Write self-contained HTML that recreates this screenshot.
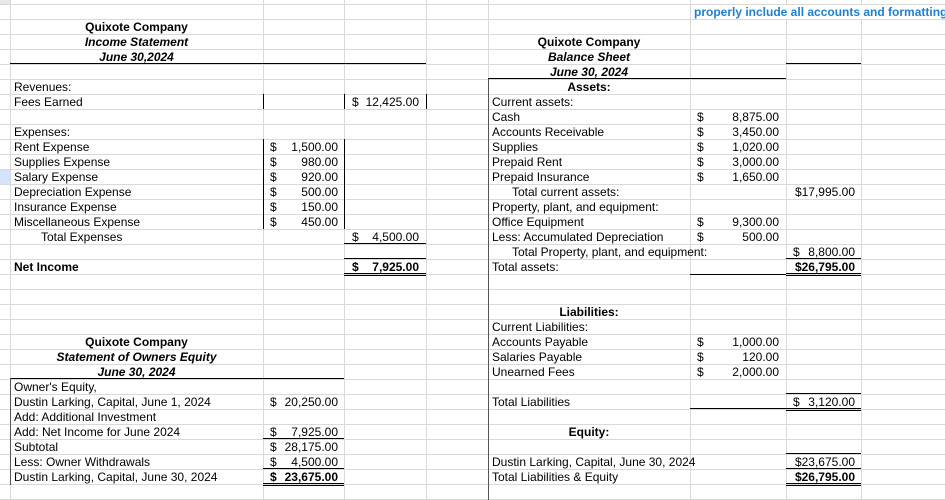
<!DOCTYPE html>
<html><head><meta charset="utf-8"><style>
body{margin:0;width:945px;height:500px;overflow:hidden;background:#fff;position:relative;font-family:"Liberation Sans",Arial,sans-serif;font-size:12px;color:#000}
.g{position:absolute;left:0;top:4px;width:945px;height:496px;background:repeating-linear-gradient(to bottom,#d9d9d9 0,#d9d9d9 1px,transparent 1px,transparent 15px)}
.v{position:absolute;top:0;width:1px;height:500px;background:#d9d9d9}
.t{position:absolute;line-height:15px;white-space:nowrap;margin-top:1px}
.c{text-align:center}
.r{text-align:right}
.b{font-weight:bold}
.i{font-style:italic;font-weight:bold}
.h{position:absolute;height:1px;background:#000}
.vb{position:absolute;width:1px;background:#000}
</style></head><body>
<div class="g"></div>
<div style="position:absolute;left:0;top:0;width:10px;height:4px;background:#e8e8e8"></div>
<div style="position:absolute;left:0;top:170px;width:10px;height:14px;background:#d3e3fd"></div>
<div class="v" style="left:10px"></div><div class="v" style="left:263px"></div><div class="v" style="left:344px"></div><div class="v" style="left:426px"></div><div class="v" style="left:488px"></div><div class="v" style="left:690px"></div><div class="v" style="left:786px"></div><div class="v" style="left:861px"></div>

<div class="h" style="left:10px;top:63px;width:416px"></div>
<div class="h" style="left:786px;top:63px;width:75px"></div>
<div class="h" style="left:488px;top:78px;width:298px"></div>
<div class="vb" style="left:263px;top:94px;height:15px"></div>
<div class="vb" style="left:344px;top:94px;height:15px"></div>
<div class="vb" style="left:426px;top:94px;height:15px"></div>
<div class="vb" style="left:263px;top:139px;height:90px"></div>
<div class="vb" style="left:344px;top:139px;height:90px"></div>
<div class="h" style="left:344px;top:243px;width:82px"></div>
<div class="h" style="left:344px;top:258px;width:82px"></div>
<div class="h" style="left:344px;top:273px;width:82px"></div><div class="h" style="left:344px;top:275px;width:82px"></div>
<div class="h" style="left:786px;top:258px;width:75px"></div>
<div class="h" style="left:786px;top:273px;width:75px"></div><div class="h" style="left:786px;top:275px;width:75px"></div>
<div class="h" style="left:690px;top:274px;width:96px"></div>
<div class="vb" style="left:488px;top:79px;height:421px;background:#555"></div>
<div class="h" style="left:10px;top:378px;width:334px"></div>
<div class="vb" style="left:10px;top:378px;height:107px;background:#555"></div>
<div class="h" style="left:263px;top:438px;width:81px"></div>
<div class="h" style="left:263px;top:468px;width:81px"></div>
<div class="h" style="left:263px;top:483px;width:81px"></div><div class="h" style="left:263px;top:485px;width:81px"></div>
<div class="h" style="left:786px;top:393px;width:75px"></div>
<div class="h" style="left:690px;top:408px;width:96px"></div>
<div class="h" style="left:786px;top:408px;width:75px"></div><div class="h" style="left:786px;top:410px;width:75px"></div>
<div class="h" style="left:786px;top:453px;width:75px"></div>
<div class="h" style="left:786px;top:468px;width:75px"></div>
<div class="h" style="left:786px;top:483px;width:75px"></div><div class="h" style="left:786px;top:485px;width:75px"></div>

<div style="position:absolute;left:691px;top:5px;width:254px;height:14px;background:#fff"></div>
<div class="t b" style="left:694px;top:4px;color:#1f7fcf">properly include all accounts and formatting</div>

<div class="t c b" style="left:10px;width:253px;top:19px">Quixote Company</div>
<div class="t c i" style="left:10px;width:253px;top:34px">Income Statement</div>
<div class="t c i" style="left:10px;width:253px;top:49px">June 30,2024</div>
<div class="t" style="left:14px;top:79px">Revenues:</div>
<div class="t" style="left:14px;top:94px">Fees Earned</div>
<div class="t" style="left:352px;top:94px">$</div><div class="t r" style="left:344px;width:75px;top:94px">12,425.00</div>
<div class="t" style="left:14px;top:124px">Expenses:</div>
<div class="t" style="left:14px;top:139px">Rent Expense</div>
<div class="t" style="left:14px;top:154px">Supplies Expense</div>
<div class="t" style="left:14px;top:169px">Salary Expense</div>
<div class="t" style="left:14px;top:184px">Depreciation Expense</div>
<div class="t" style="left:14px;top:199px">Insurance Expense</div>
<div class="t" style="left:14px;top:214px">Miscellaneous Expense</div>
<div class="t" style="left:41px;top:229px">Total Expenses</div>
<div class="t" style="left:270px;top:139px">$</div><div class="t r" style="left:263px;width:75px;top:139px">1,500.00</div>
<div class="t" style="left:270px;top:154px">$</div><div class="t r" style="left:263px;width:75px;top:154px">980.00</div>
<div class="t" style="left:270px;top:169px">$</div><div class="t r" style="left:263px;width:75px;top:169px">920.00</div>
<div class="t" style="left:270px;top:184px">$</div><div class="t r" style="left:263px;width:75px;top:184px">500.00</div>
<div class="t" style="left:270px;top:199px">$</div><div class="t r" style="left:263px;width:75px;top:199px">150.00</div>
<div class="t" style="left:270px;top:214px">$</div><div class="t r" style="left:263px;width:75px;top:214px">450.00</div>
<div class="t" style="left:352px;top:229px">$</div><div class="t r" style="left:344px;width:75px;top:229px">4,500.00</div>
<div class="t b" style="left:14px;top:259px">Net Income</div>
<div class="t b" style="left:352px;top:259px">$</div><div class="t r b" style="left:344px;width:75px;top:259px">7,925.00</div>

<div class="t c b" style="left:10px;width:253px;top:334px">Quixote Company</div>
<div class="t c i" style="left:10px;width:253px;top:349px">Statement of Owners Equity</div>
<div class="t c i" style="left:10px;width:253px;top:364px">June 30, 2024</div>
<div class="t" style="left:14px;top:379px">Owner's Equity,</div>
<div class="t" style="left:14px;top:394px">Dustin Larking, Capital, June 1, 2024</div>
<div class="t" style="left:14px;top:409px">Add: Additional Investment</div>
<div class="t" style="left:14px;top:424px">Add: Net Income for June 2024</div>
<div class="t" style="left:14px;top:439px">Subtotal</div>
<div class="t" style="left:14px;top:454px">Less: Owner Withdrawals</div>
<div class="t" style="left:14px;top:469px">Dustin Larking, Capital, June 30, 2024</div>
<div class="t" style="left:270px;top:394px">$</div><div class="t r" style="left:263px;width:75px;top:394px">20,250.00</div>
<div class="t" style="left:270px;top:424px">$</div><div class="t r" style="left:263px;width:75px;top:424px">7,925.00</div>
<div class="t" style="left:270px;top:439px">$</div><div class="t r" style="left:263px;width:75px;top:439px">28,175.00</div>
<div class="t" style="left:270px;top:454px">$</div><div class="t r" style="left:263px;width:75px;top:454px">4,500.00</div>
<div class="t b" style="left:270px;top:469px">$</div><div class="t r b" style="left:263px;width:75px;top:469px">23,675.00</div>

<div class="t c b" style="left:488px;width:202px;top:34px">Quixote Company</div>
<div class="t c i" style="left:488px;width:202px;top:49px">Balance Sheet</div>
<div class="t c i" style="left:488px;width:202px;top:64px">June 30, 2024</div>
<div class="t c b" style="left:488px;width:202px;top:79px">Assets:</div>
<div class="t" style="left:492px;top:94px">Current assets:</div>
<div class="t" style="left:492px;top:109px">Cash</div>
<div class="t" style="left:492px;top:124px">Accounts Receivable</div>
<div class="t" style="left:492px;top:139px">Supplies</div>
<div class="t" style="left:492px;top:154px">Prepaid Rent</div>
<div class="t" style="left:492px;top:169px">Prepaid Insurance</div>
<div class="t" style="left:512px;top:184px">Total current assets:</div>
<div class="t" style="left:492px;top:199px">Property, plant, and equipment:</div>
<div class="t" style="left:492px;top:214px">Office Equipment</div>
<div class="t" style="left:492px;top:229px">Less: Accumulated Depreciation</div>
<div class="t" style="left:512px;top:244px">Total Property, plant, and equipment:</div>
<div class="t" style="left:492px;top:259px">Total assets:</div>
<div class="t" style="left:697px;top:109px">$</div><div class="t r" style="left:690px;width:89px;top:109px">8,875.00</div>
<div class="t" style="left:697px;top:124px">$</div><div class="t r" style="left:690px;width:89px;top:124px">3,450.00</div>
<div class="t" style="left:697px;top:139px">$</div><div class="t r" style="left:690px;width:89px;top:139px">1,020.00</div>
<div class="t" style="left:697px;top:154px">$</div><div class="t r" style="left:690px;width:89px;top:154px">3,000.00</div>
<div class="t" style="left:697px;top:169px">$</div><div class="t r" style="left:690px;width:89px;top:169px">1,650.00</div>
<div class="t" style="left:697px;top:214px">$</div><div class="t r" style="left:690px;width:89px;top:214px">9,300.00</div>
<div class="t" style="left:697px;top:229px">$</div><div class="t r" style="left:690px;width:89px;top:229px">500.00</div>
<div class="t r" style="left:786px;width:69px;top:184px">$17,995.00</div>
<div class="t" style="left:793px;top:244px">$</div><div class="t r" style="left:786px;width:69px;top:244px">8,800.00</div>
<div class="t r b" style="left:786px;width:69px;top:259px">$26,795.00</div>

<div class="t c b" style="left:488px;width:202px;top:304px">Liabilities:</div>
<div class="t" style="left:492px;top:319px">Current Liabilities:</div>
<div class="t" style="left:492px;top:334px">Accounts Payable</div>
<div class="t" style="left:492px;top:349px">Salaries Payable</div>
<div class="t" style="left:492px;top:364px">Unearned Fees</div>
<div class="t" style="left:697px;top:334px">$</div><div class="t r" style="left:690px;width:89px;top:334px">1,000.00</div>
<div class="t" style="left:697px;top:349px">$</div><div class="t r" style="left:690px;width:89px;top:349px">120.00</div>
<div class="t" style="left:697px;top:364px">$</div><div class="t r" style="left:690px;width:89px;top:364px">2,000.00</div>
<div class="t" style="left:492px;top:394px">Total Liabilities</div>
<div class="t" style="left:793px;top:394px">$</div><div class="t r" style="left:786px;width:69px;top:394px">3,120.00</div>
<div class="t c b" style="left:488px;width:202px;top:424px">Equity:</div>
<div class="t" style="left:492px;top:454px">Dustin Larking, Capital, June 30, 2024</div>
<div class="t" style="left:492px;top:469px">Total Liabilities &amp; Equity</div>
<div class="t r" style="left:786px;width:69px;top:454px">$23,675.00</div>
<div class="t r b" style="left:786px;width:69px;top:469px">$26,795.00</div>
</body></html>
